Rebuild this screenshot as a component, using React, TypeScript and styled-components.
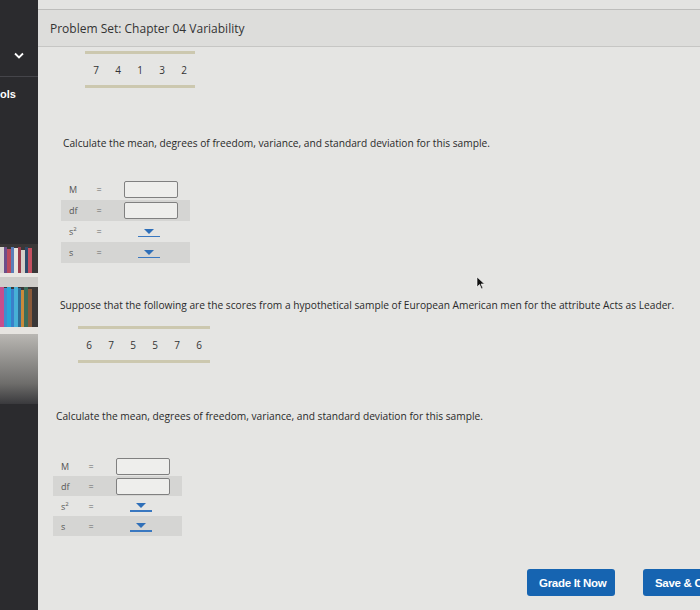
import React from "react";
import styled, { createGlobalStyle } from "styled-components";

const GlobalStyle = createGlobalStyle`
  html, body {
    margin: 0;
    padding: 0;
  }
  body {
    width: 700px;
    height: 610px;
    overflow: hidden;
    background: #e5e5e3;
    font-family: "Open Sans", "DejaVu Sans", sans-serif;
    color: #3b3b3b;
  }
`;

const Page = styled.div`
  display: flex;
  width: 700px;
  height: 610px;
  overflow: hidden;
`;

const Sidebar = styled.div`
  width: 38px;
  flex-shrink: 0;
  display: flex;
  flex-direction: column;
  background: #2b2b2e;
  color: #fff;
  overflow: hidden;
`;

const SideTop = styled.div`
  height: 77px;
  display: flex;
  justify-content: center;
  padding-top: 52px;
  box-sizing: border-box;
  border-bottom: 1px solid #45454a;
`;

const SideLabel = styled.div`
  font-family: "Liberation Sans", Arial, sans-serif;
  font-weight: 700;
  font-size: 11px;
  margin-top: 11px;
  height: 156px;
`;

const Shelf = styled.div`
  height: 90px;
`;

const ShelfFade = styled.div`
  height: 70px;
  background: linear-gradient(#b9b7b3, #6f6e6c 70%, #3a3a3d);
`;

const Main = styled.div`
  flex: 1;
  display: flex;
  flex-direction: column;
  overflow: hidden;
`;

const TopBand = styled.div`
  height: 9px;
  background: #e3e3e1;
`;

const Header = styled.div`
  height: 36px;
  display: flex;
  align-items: center;
  padding-left: 12px;
  background: #dddddb;
  border-top: 1px solid #bdbdbb;
  border-bottom: 1px solid #c6c6c4;
  font-size: 12px;
  color: #333;
`;

const Content = styled.div`
  position: relative;
  flex: 1;
  display: flex;
  flex-direction: column;
  align-items: flex-start;
`;

const DataTable = styled.div<{ $left: number; $top: number }>`
  display: flex;
  height: 31px;
  align-items: center;
  margin-left: ${(p) => p.$left}px;
  margin-top: ${(p) => p.$top}px;
  border-top: 3px solid #ccc8af;
  border-bottom: 3px solid #ccc8af;
`;

const Num = styled.span`
  width: 22px;
  text-align: center;
  font-size: 10px;
  color: #333;
`;

const Prompt = styled.p<{ $left: number; $top: number }>`
  margin: ${(p) => p.$top}px 0 0 ${(p) => p.$left}px;
  font-size: 10.2px;
  line-height: 14px;
  color: #2a2a2a;
  white-space: nowrap;
`;

const AnswerTable = styled.div<{ $left: number; $top: number }>`
  display: flex;
  flex-direction: column;
  margin-left: ${(p) => p.$left}px;
  margin-top: ${(p) => p.$top}px;
`;

const Row = styled.div<{ $shaded?: boolean; $h: number }>`
  display: grid;
  grid-template-columns: 20px 20px 15px 54px;
  align-items: center;
  width: 129px;
  height: ${(p) => p.$h}px;
  padding-left: 8px;
  box-sizing: border-box;
  background: ${(p) => (p.$shaded ? "#d5d5d3" : "transparent")};
  font-size: 9px;
  color: #555;
`;

const Eq = styled.span`
  grid-column: 2;
  text-align: center;
  color: #666;
`;

const Box = styled.div`
  grid-column: 4;
  height: 15px;
  border: 1px solid #808080;
  border-radius: 2px;
  background: #eeeeec;
`;

const Drop = styled.div`
  grid-column: 4;
  width: 22px;
  margin-left: 14px;
  display: flex;
  flex-direction: column;
  align-items: center;
  gap: 2px;
  padding-top: 3px;
`;

const Arrow = styled.div`
  width: 0;
  height: 0;
  border-left: 5px solid transparent;
  border-right: 5px solid transparent;
  border-top: 5px solid #2f6fb8;
`;

const Underline = styled.div`
  width: 22px;
  height: 1.5px;
  background: #3a78c0;
`;

const ButtonBar = styled.div`
  display: flex;
  gap: 28px;
  margin-left: 489px;
  margin-top: 33px;
`;

const Button = styled.div<{ $width: number }>`
  flex-shrink: 0;
  width: ${(p) => p.$width}px;
  height: 27px;
  display: flex;
  align-items: center;
  padding-left: 12px;
  box-sizing: border-box;
  background: #1664b1;
  border-radius: 3px;
  color: #fff;
  font-family: "Liberation Sans", Arial, sans-serif;
  font-weight: 700;
  font-size: 11.5px;
  letter-spacing: -0.3px;
  white-space: nowrap;
`;

const Cursor = styled.svg`
  position: absolute;
  left: 438px;
  top: 229px;
`;

type AnswerProps = { left: number; top: number; rowH: number };

const Answers = ({ left, top, rowH }: AnswerProps) => (
  <AnswerTable $left={left} $top={top}>
    <Row $h={rowH}>
      <span>M</span>
      <Eq>=</Eq>
      <Box />
    </Row>
    <Row $h={rowH} $shaded>
      <span>df</span>
      <Eq>=</Eq>
      <Box />
    </Row>
    <Row $h={rowH}>
      <span>
        s<sup style={{ fontSize: 6 }}>2</sup>
      </span>
      <Eq>=</Eq>
      <Drop>
        <Arrow />
        <Underline />
      </Drop>
    </Row>
    <Row $h={rowH} $shaded>
      <span>s</span>
      <Eq>=</Eq>
      <Drop>
        <Arrow />
        <Underline />
      </Drop>
    </Row>
  </AnswerTable>
);

const Books = () => (
  <svg width="38" height="90" viewBox="0 0 38 90">
    <rect width="38" height="90" fill="#3a3838" />
    <rect x="0" y="3" width="4" height="26" fill="#d9d6d2" />
    <rect x="4" y="3" width="3" height="26" fill="#6d4e8a" />
    <rect x="7" y="5" width="4" height="24" fill="#b94a5c" />
    <rect x="11" y="3" width="3" height="26" fill="#5c7db8" />
    <rect x="14" y="4" width="4" height="25" fill="#e8e4de" />
    <rect x="18" y="3" width="3" height="26" fill="#9a3b4c" />
    <rect x="21" y="6" width="4" height="23" fill="#d6cfc8" />
    <rect x="25" y="3" width="3" height="26" fill="#2f4a6b" />
    <rect x="28" y="4" width="4" height="25" fill="#c45060" />
    <rect x="0" y="29" width="38" height="4" fill="#e9e7e3" />
    <rect x="0" y="33" width="38" height="10" fill="#cfcdca" />
    <rect x="0" y="43" width="4" height="40" fill="#c84f8c" />
    <rect x="4" y="44" width="3" height="39" fill="#3f8fd0" />
    <rect x="7" y="43" width="4" height="40" fill="#2aa7d8" />
    <rect x="11" y="45" width="3" height="38" fill="#3b7fc9" />
    <rect x="14" y="43" width="4" height="40" fill="#47b0d6" />
    <rect x="18" y="44" width="3" height="39" fill="#2f6e98" />
    <rect x="21" y="46" width="3" height="37" fill="#c98a3a" />
    <rect x="24" y="43" width="4" height="40" fill="#3c6d5a" />
    <rect x="28" y="45" width="4" height="38" fill="#8a5a3a" />
    <rect x="0" y="83" width="38" height="7" fill="#e6e4e0" />
  </svg>
);

const App = () => {
  return (
    <>
      <GlobalStyle />
      <Page>
        <Sidebar>
          <SideTop>
            <svg width="10" height="7" viewBox="0 0 10 7">
              <path d="M1 1.5 L5 5.5 L9 1.5" stroke="#fff" strokeWidth="1.8" fill="none" />
            </svg>
          </SideTop>
          <SideLabel>ols</SideLabel>
          <Shelf>
            <Books />
          </Shelf>
          <ShelfFade />
        </Sidebar>
        <Main>
          <TopBand />
          <Header>Problem Set: Chapter 04 Variability</Header>
          <Content>
            <DataTable $left={47} $top={4}>
              {[7, 4, 1, 3, 2].map((n, i) => (
                <Num key={i}>{n}</Num>
              ))}
            </DataTable>
            <Prompt $left={25} $top={48}>
              Calculate the mean, degrees of freedom, variance, and standard deviation for this sample.
            </Prompt>
            <Answers left={23} top={29} rowH={21} />
            <Prompt $left={22} $top={35}>
              Suppose that the following are the scores from a hypothetical sample of European American men for the attribute Acts as Leader.
            </Prompt>
            <DataTable $left={40} $top={14}>
              {[6, 7, 5, 5, 7, 6].map((n, i) => (
                <Num key={i}>{n}</Num>
              ))}
            </DataTable>
            <Prompt $left={18} $top={46}>
              Calculate the mean, degrees of freedom, variance, and standard deviation for this sample.
            </Prompt>
            <Answers left={15} top={33} rowH={20} />
            <ButtonBar>
              <Button $width={88}>Grade It Now</Button>
              <Button $width={80}>Save &amp; Continue</Button>
            </ButtonBar>
            <Cursor width="9" height="14" viewBox="0 0 9 14">
              <path d="M1 1 L1 11 L3.5 8.5 L5.5 13 L7 12.3 L5 8 L8.5 8 Z" fill="#111" stroke="#fff" strokeWidth="0.6" />
            </Cursor>
          </Content>
        </Main>
      </Page>
    </>
  );
};

export default App;
